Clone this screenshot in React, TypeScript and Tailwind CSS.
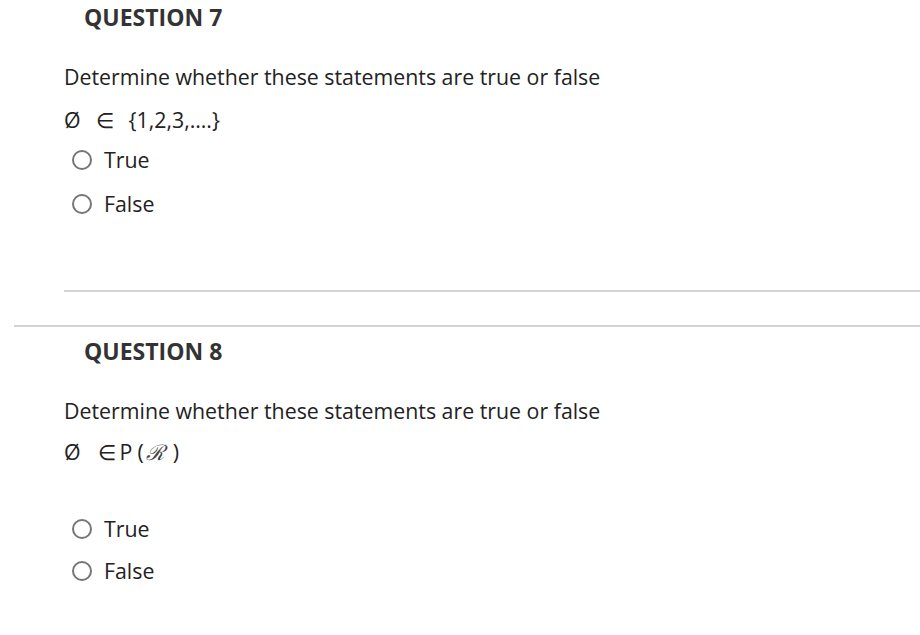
import React from 'react';

function Radio({ label, h }: { label: string; h: string }) {
  return (
    <label className={`flex items-center ${h}`}>
      <span className="ml-[72px] w-[20px] h-[20px] rounded-full border-2 border-[#767676] bg-white" />
      <span className="ml-[12px] text-[21.33px] text-[#222]">{label}</span>
    </label>
  );
}

function Question({
  num,
  symbol,
  symGap,
  optGap,
  rowH,
}: {
  num: number;
  symbol: React.ReactNode;
  symGap: string;
  optGap: string;
  rowH: string;
}) {
  return (
    <div>
      <h2 className="pl-[84px] text-[23px] font-bold text-[#333] leading-[34px]">QUESTION {num}</h2>
      <p className="pl-[64px] mt-[26px] text-[21.33px] text-[#222] leading-[34px]">
        Determine whether these statements are true or false
      </p>
      <div className={`pl-[64px] ${symGap} text-[21.33px] text-[#222] leading-[28px]`}>{symbol}</div>
      <div className={optGap}>
        <Radio label="True" h={rowH} />
        <Radio label="False" h={rowH} />
      </div>
    </div>
  );
}

export default function App() {
  return (
    <div className="w-[920px] h-[635px] bg-white overflow-hidden" style={{ fontFamily: '"Open Sans", sans-serif' }}>
      <Question
        num={7}
        symGap="mt-[12px]"
        optGap="mt-[4px]"
        rowH="h-[44px]"
        symbol={
          <span>
            Ø<span className="ml-[15px]">∈</span>
            <span className="ml-[15px]">{'{1,2,3,….}'}</span>
          </span>
        }
      />
      <div className="mt-[64px] ml-[64px] border-t-2 border-[#d3d3d3]" />
      <div className="mt-[33px] ml-[14px] border-t-2 border-[#d3d3d3]" />
      <div className="mt-[7px]">
        <Question
          num={8}
          symGap="mt-[10px]"
          optGap="mt-[41px]"
          rowH="h-[42px]"
          symbol={
            <span>
              Ø<span className="ml-[17px]">∈</span>
              <span className="ml-[4px]">P</span>
              <span className="ml-[5px]">(</span>
              <span className="ml-[2px] italic text-[#444]" style={{ fontFamily: '"DejaVu Serif", serif' }}>ℛ</span>
              <span className="ml-[8px]">)</span>
            </span>
          }
        />
      </div>
    </div>
  );
}
